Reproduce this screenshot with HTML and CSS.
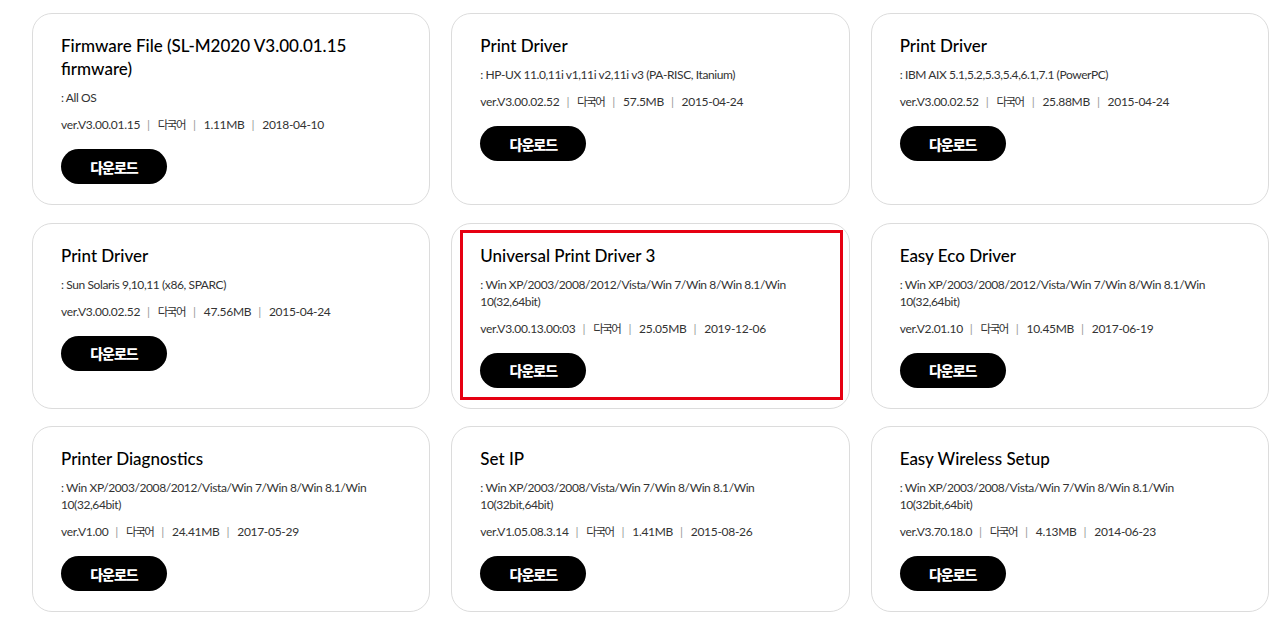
FILE: index.html
```html
<!DOCTYPE html>
<html lang="ko">
<head>
<meta charset="utf-8">
<title>Downloads</title>
<link rel="stylesheet" href="styles.css">
</head>
<body>
<div class="grid">
  <div class="card">
    <h3 class="title">Firmware File (SL-M2020 V3.00.01.15 firmware)</h3>
    <p class="os">: All OS</p>
    <p class="meta"><span>ver.V3.00.01.15</span><i>|</i><span class="ko">다국어</span><i>|</i><span>1.11MB</span><i>|</i><span>2018-04-10</span></p>
    <button class="btn">다운로드</button>
  </div>
  <div class="card">
    <h3 class="title">Print Driver</h3>
    <p class="os">: HP-UX 11.0,11i v1,11i v2,11i v3 (PA-RISC, Itanium)</p>
    <p class="meta"><span>ver.V3.00.02.52</span><i>|</i><span class="ko">다국어</span><i>|</i><span>57.5MB</span><i>|</i><span>2015-04-24</span></p>
    <button class="btn">다운로드</button>
  </div>
  <div class="card">
    <h3 class="title">Print Driver</h3>
    <p class="os">: IBM AIX 5.1,5.2,5.3,5.4,6.1,7.1 (PowerPC)</p>
    <p class="meta"><span>ver.V3.00.02.52</span><i>|</i><span class="ko">다국어</span><i>|</i><span>25.88MB</span><i>|</i><span>2015-04-24</span></p>
    <button class="btn">다운로드</button>
  </div>
  <div class="card">
    <h3 class="title">Print Driver</h3>
    <p class="os">: Sun Solaris 9,10,11 (x86, SPARC)</p>
    <p class="meta"><span>ver.V3.00.02.52</span><i>|</i><span class="ko">다국어</span><i>|</i><span>47.56MB</span><i>|</i><span>2015-04-24</span></p>
    <button class="btn">다운로드</button>
  </div>
  <div class="card highlighted">
    <h3 class="title">Universal Print Driver 3</h3>
    <p class="os">: Win XP/2003/2008/2012/Vista/Win 7/Win 8/Win 8.1/Win 10(32,64bit)</p>
    <p class="meta"><span>ver.V3.00.13.00:03</span><i>|</i><span class="ko">다국어</span><i>|</i><span>25.05MB</span><i>|</i><span>2019-12-06</span></p>
    <button class="btn">다운로드</button>
  </div>
  <div class="card">
    <h3 class="title">Easy Eco Driver</h3>
    <p class="os">: Win XP/2003/2008/2012/Vista/Win 7/Win 8/Win 8.1/Win 10(32,64bit)</p>
    <p class="meta"><span>ver.V2.01.10</span><i>|</i><span class="ko">다국어</span><i>|</i><span>10.45MB</span><i>|</i><span>2017-06-19</span></p>
    <button class="btn">다운로드</button>
  </div>
  <div class="card">
    <h3 class="title">Printer Diagnostics</h3>
    <p class="os">: Win XP/2003/2008/2012/Vista/Win 7/Win 8/Win 8.1/Win 10(32,64bit)</p>
    <p class="meta"><span>ver.V1.00</span><i>|</i><span class="ko">다국어</span><i>|</i><span>24.41MB</span><i>|</i><span>2017-05-29</span></p>
    <button class="btn">다운로드</button>
  </div>
  <div class="card">
    <h3 class="title">Set IP</h3>
    <p class="os">: Win XP/2003/2008/Vista/Win 7/Win 8/Win 8.1/Win 10(32bit,64bit)</p>
    <p class="meta"><span>ver.V1.05.08.3.14</span><i>|</i><span class="ko">다국어</span><i>|</i><span>1.41MB</span><i>|</i><span>2015-08-26</span></p>
    <button class="btn">다운로드</button>
  </div>
  <div class="card">
    <h3 class="title">Easy Wireless Setup</h3>
    <p class="os">: Win XP/2003/2008/Vista/Win 7/Win 8/Win 8.1/Win 10(32bit,64bit)</p>
    <p class="meta"><span>ver.V3.70.18.0</span><i>|</i><span class="ko">다국어</span><i>|</i><span>4.13MB</span><i>|</i><span>2014-06-23</span></p>
    <button class="btn">다운로드</button>
  </div>
</div>
</body>
</html>
```
FILE: styles.css
```css
* { box-sizing: border-box; }
html, body { background: #fff; }
body {
  margin: 13px 11px 0 32px;
  font-family: "Lato", "Noto Sans CJK KR", sans-serif;
  color: #000;
}
.grid {
  width: 1237px;
  display: grid;
  grid-template-columns: repeat(3, 1fr);
  column-gap: 21px;
  row-gap: 17.5px;
}
.card {
  position: relative;
  border: 1px solid #dcdcdc;
  border-radius: 20px;
  padding: 20px 28px 20px 28px;
  display: flex;
  flex-direction: column;
  align-items: flex-start;
}
.title {
  margin: 0;
  font-size: 17px;
  line-height: 23px;
  font-weight: 500;
  color: #000;
}
.os {
  margin: 9px 0 0;
  font-size: 12px;
  line-height: 17px;
  letter-spacing: -0.4px;
  color: #333;
}
.meta {
  margin: 10px 0 0;
  height: 17px;
  display: flex;
  align-items: center;
  white-space: nowrap;
  font-size: 12px;
  line-height: 17px;
  letter-spacing: -0.3px;
  color: #333;
}
.meta .ko {
  font-family: "Noto Sans CJK KR", sans-serif;
  font-size: 11.5px;
  line-height: 17px;
  letter-spacing: -1.5px;
  font-weight: 400;
  margin-right: 1px;
}
.meta i {
  font-style: normal;
  color: #999;
  margin: 0 8px 0 7px;
}
.btn {
  margin-top: 16px;
  width: 106px;
  height: 35px;
  border: 0;
  border-radius: 17.5px;
  background: #000;
  color: #fff;
  font-family: "Noto Sans CJK KR", sans-serif;
  font-size: 14px;
  letter-spacing: -1px;
  font-weight: 900;
  padding: 0;
}
.highlighted::after {
  content: "";
  position: absolute;
  top: 6px;
  left: 8px;
  right: 6px;
  bottom: 8px;
  border: 3px solid #e60012;
  pointer-events: none;
}
```
